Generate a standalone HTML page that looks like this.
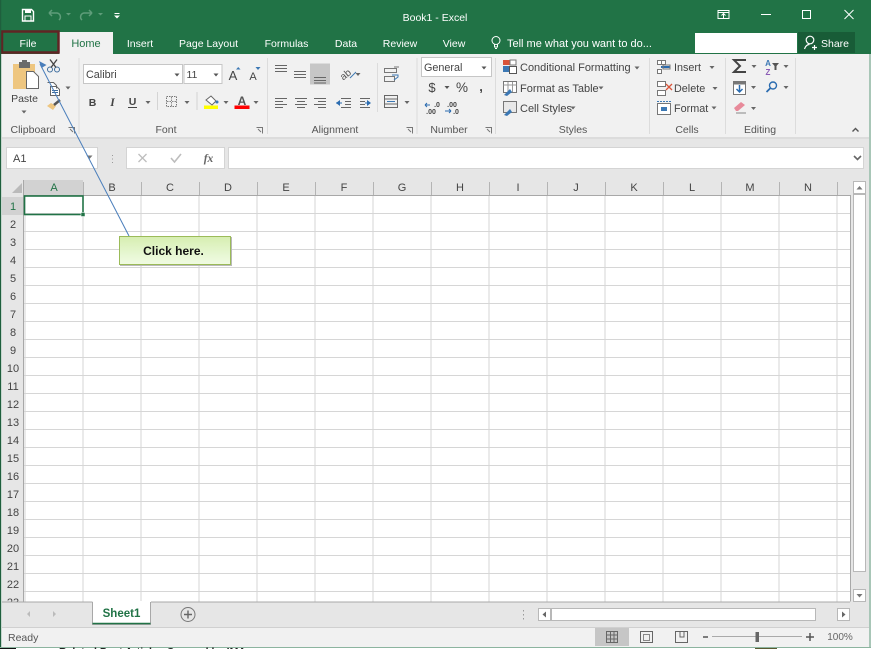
<!DOCTYPE html>
<html><head><meta charset="utf-8">
<style>
html,body{margin:0;padding:0;background:#fff;width:871px;height:649px;overflow:hidden}
svg{display:block;font-family:"Liberation Sans",sans-serif;filter:blur(.3px)}
text{font-size:10.5px;fill:#444}
.w{fill:#fff}
.m{text-anchor:middle}
.h{text-anchor:middle;fill:#444;font-size:11px}
.r{font-size:10.8px}
.ic{fill:none;stroke:#555;stroke-width:1}
</style></head><body>
<svg width="871" height="649" viewBox="0 0 871 649" xmlns="http://www.w3.org/2000/svg">
<defs>
<pattern id="grid" x="25.500" y="196" width="58" height="18" patternUnits="userSpaceOnUse">
<path d="M57.500 0V18M0 17.500H58" fill="none" stroke="#d6d6d6" stroke-width="1"/>
</pattern>
<linearGradient id="call" x1="0" y1="0" x2="0" y2="1"><stop offset="0" stop-color="#d6eeb0"/><stop offset=".7" stop-color="#e9f8d6"/><stop offset="1" stop-color="#f0fbe2"/></linearGradient>
</defs>
<rect width="871" height="649" fill="#fff"/>
<!-- title bar -->
<rect x="0" y="0" width="871" height="54" fill="#217346"/>
<path d="M22.500 9.500h9l2 2v9.500h-11z" fill="none" stroke="#fff" stroke-width="1.400"/>
<rect x="25" y="9" width="6" height="4" fill="#fff"/><rect x="25" y="16" width="6" height="5" fill="none" stroke="#fff"/>
<path d="M49 13l3-3M49 13l3 3M49 13h8a4 4 0 0 1 2 7" fill="none" stroke="#5f9d7a" stroke-width="1.500"/>
<path d="M66 13l2.500 2.500 2.500-2.500z" fill="#5f9d7a"/>
<path d="M92 13l-3-3M92 13l-3 3M92 13h-8a4 4 0 0 0-2 7" fill="none" stroke="#5f9d7a" stroke-width="1.500"/>
<path d="M98 13l2.500 2.500 2.500-2.500z" fill="#5f9d7a"/>
<path d="M114.500 13.500h5" stroke="#fff" fill="none"/><path d="M114 15.500l3 3 3-3z" fill="#fff"/>
<text x="435" y="21" class="w m">Book1 - Excel</text>
<rect x="718" y="10.500" width="11" height="8" fill="none" stroke="#fff"/><path d="M718 12.500h11M723.500 18v-4M721.500 15.500l2-2 2 2" fill="none" stroke="#fff"/>
<path d="M761 14.500h10" stroke="#fff"/>
<rect x="802.500" y="10.500" width="8" height="8" fill="none" stroke="#fff"/>
<path d="M844.500 10l9 9M853.500 10l-9 9" stroke="#fff" fill="none"/>
<!-- tabs -->
<rect x="59" y="32" width="54" height="22" fill="#f1f1f1"/>
<rect x="2" y="31.500" width="56.500" height="21" fill="#217346" stroke="#612424" stroke-width="2.500"/>
<text x="28" y="47" class="w m">File</text>
<text x="86" y="47" class="m" style="fill:#217346;font-size:11px">Home</text>
<text x="140" y="47" class="w m">Insert</text>
<text x="208.500" y="47" class="w m">Page Layout</text>
<text x="286.500" y="47" class="w m">Formulas</text>
<text x="346" y="47" class="w m">Data</text>
<text x="400" y="47" class="w m">Review</text>
<text x="454" y="47" class="w m">View</text>
<circle cx="496" cy="40.500" r="4" fill="none" stroke="#fff"/><path d="M494.500 44.500v2.500h3v-2.500M495 48.500h2" fill="none" stroke="#fff"/>
<text x="507" y="47" class="w" style="font-size:11px">Tell me what you want to do...</text>
<rect x="695" y="33" width="102" height="20" fill="#fff"/>
<rect x="798" y="32" width="57" height="21" fill="#185c37"/>
<circle cx="810" cy="40" r="3.800" fill="none" stroke="#fff" stroke-width="1.200"/>
<path d="M804.500 49c1-3 3-4.500 5-4.500M812 47.500h5M814.500 45v5" fill="none" stroke="#fff" stroke-width="1.200"/>
<text x="821" y="47" class="w">Share</text>
<!-- ribbon -->
<rect x="2" y="54" width="867" height="83" fill="#f1f1f1"/>
<path d="M79 58v76M267.500 58v76M417 58v76M495.500 58v76M649.500 58v76M725.500 58v76M795.500 58v76" stroke="#dcdcdc" stroke-width="1" fill="none"/>
<path d="M377.500 63v49" stroke="#dcdcdc"/>
<path d="M197 92v18M157.500 92v18" stroke="#d4d4d4"/>
<!-- clipboard -->
<rect x="13" y="64" width="22" height="25" fill="#eec680"/>
<rect x="19" y="62" width="11" height="6" fill="#6b6b6b"/><rect x="22" y="60" width="5" height="4" fill="#6b6b6b"/>
<path d="M26.500 71.500h7l5 5v12h-12z" fill="#fff" stroke="#666"/>
<text x="24.500" y="102" class="m">Paste</text>
<path d="M21.500 110.500h5l-2.500 3z" fill="#666"/>
<circle cx="50" cy="69.500" r="2.500" fill="none" stroke="#3c6c9d"/><circle cx="57" cy="69.500" r="2.500" fill="none" stroke="#3c6c9d"/>
<path d="M51 67.500l6-8M56 67.500l-6-8" stroke="#444" stroke-width="1.300" fill="none"/>
<path d="M47.500 82.500h6l3 3v3M50.500 86.500h6l3 3v6h-9z" fill="#fff" stroke="#666"/>
<path d="M52 90.500h6M52 92.500h6" stroke="#3c6c9d"/>
<path d="M65.500 86.500h5l-2.500 3z" fill="#666"/>
<path d="M47 106l6 4 3-4-5-3z" fill="#eec680"/><path d="M54 105l6-5" stroke="#555" stroke-width="2.500"/>
<text x="33" y="133" class="m" style="fill:#555">Clipboard</text>
<path d="M68.500 127.500h6v6M70 129l3 3" fill="none" stroke="#777"/>
<!-- font -->
<rect x="83.500" y="64.500" width="99" height="19" fill="#fff" stroke="#c6c6c6"/>
<rect x="184" y="64.500" width="38" height="19" fill="#fff" stroke="#c6c6c6"/>
<text x="86" y="78" class="r">Calibri</text><text x="186.500" y="78">11</text>
<path d="M174.500 73.500h5l-2.500 3zM213.500 73.500h5l-2.500 3z" fill="#555"/>
<text x="233" y="80" class="m" style="font-size:13px">A</text><path d="M236 69.500h4.500l-2.250-2.500z" fill="#3c78b4"/>
<text x="253" y="80" class="m" style="font-size:11px">A</text><path d="M255.500 67h5l-2.500 3z" fill="#3c78b4"/>
<text x="92.500" y="106" class="m" style="font-weight:bold">B</text>
<text x="112.500" y="106" class="m" style="font-style:italic;font-family:'Liberation Serif',serif;font-weight:bold;font-size:11.500px">I</text>
<text x="132.500" y="105" class="m" style="font-weight:bold">U</text><path d="M128 107.500h9" stroke="#444"/>
<path d="M145.500 101h5l-2.500 3z" fill="#666"/>
<rect x="166.500" y="96.500" width="10" height="10" fill="none" stroke="#777" stroke-dasharray="1.500 1"/><path d="M171.500 97v10M167 101.500h10" stroke="#888" stroke-dasharray="1.500 1"/>
<path d="M184.500 101h5l-2.500 3z" fill="#666"/>
<path d="M206 100l5-4 5 5-4 4z" fill="#fff" stroke="#666"/><circle cx="217" cy="102" r="1.500" fill="#3c78b4"/>
<rect x="204" y="105.500" width="14" height="3.500" fill="#ff0"/>
<path d="M223.500 101h5l-2.500 3z" fill="#666"/>
<text x="242" y="105" class="m" style="font-size:12px;font-weight:bold;fill:#555">A</text>
<rect x="234.500" y="105.500" width="15" height="3.500" fill="#f00"/>
<path d="M253.500 101h5l-2.500 3z" fill="#666"/>
<text x="166" y="133" class="m" style="fill:#555">Font</text>
<path d="M256.500 127.500h6v6M258 129l3 3" fill="none" stroke="#777"/>
<!-- alignment -->
<rect x="310" y="63.500" width="20" height="21" fill="#c6c6c6"/>
<path d="M275 65.500h12M275 68.500h12M275 71.500h12M294 71.500h12M294 74.500h12M294 77.500h12M314 77.500h12M314 80.500h12M314 83h12" stroke="#666" fill="none"/>
<text x="345" y="78" class="m" style="font-size:10px;fill:#555" transform="rotate(-40 345 74)">ab</text>
<path d="M350 78l6-6" stroke="#3c78b4"/><path d="M355.500 73h5l-2.500 3z" fill="#666"/>
<path d="M275 98.500h12M275 101.500h8M275 104.500h12M275 107.500h8M295 98.500h12M297 101.500h8M295 104.500h12M297 107.500h8M314 98.500h12M318 101.500h8M314 104.500h12M318 107.500h8M341 98.500h10M345 101.500h6M345 104.500h6M341 107.500h10M360 98.500h10M360 101.500h5M360 104.500h5M360 107.500h10" stroke="#666" fill="none"/>
<path d="M336 103l4-3v6zM371 103l-4-3v6z" fill="#2b6cb0"/>
<path d="M336 103h6M365 103h5" stroke="#2b6cb0"/>
<rect x="384.500" y="68.500" width="12" height="4" fill="none" stroke="#777"/><path d="M394 67h5" stroke="#777"/>
<rect x="384.500" y="76.500" width="10" height="5" fill="none" stroke="#777"/><path d="M392 75l6 0v2l-4 3" fill="none" stroke="#3c78b4"/>
<rect x="384.500" y="95.500" width="13" height="12" fill="none" stroke="#666"/><path d="M384.500 99h13M384.500 104h13" fill="none" stroke="#666"/><path d="M387 101.500h8" stroke="#3c78b4"/>
<path d="M404.500 101h5l-2.500 3z" fill="#666"/>
<text x="335" y="133" class="m" style="fill:#555">Alignment</text>
<path d="M406.500 127.500h6v6M408 129l3 3" fill="none" stroke="#777"/>
<!-- number -->
<rect x="421.500" y="57.500" width="70" height="19" fill="#fff" stroke="#c6c6c6"/>
<text x="424" y="71" class="r">General</text>
<path d="M481.500 66.500h5l-2.500 3z" fill="#555"/>
<text x="432" y="92" class="m" style="font-size:13px">$</text>
<path d="M444.500 86h5l-2.500 3z" fill="#555"/>
<text x="462" y="92" class="m" style="font-size:13.500px">%</text>
<text x="481" y="91" class="m" style="font-weight:bold;font-size:13px">,</text>
<text x="437" y="107" class="m" style="font-size:7px;font-weight:bold">.0</text>
<text x="431" y="114" style="font-size:7px;font-weight:bold" class="m">.00</text>
<path d="M425 105h5M425 105l2-2M425 105l2 2" stroke="#2b6cb0" fill="none"/>
<text x="452" y="107" class="m" style="font-size:7px;font-weight:bold">.00</text>
<text x="456" y="114" class="m" style="font-size:7px;font-weight:bold">.0</text>
<path d="M445 111h6M451 111l-2-2M451 111l-2 2" stroke="#2b6cb0" fill="none"/>
<text x="449" y="133" class="m" style="fill:#555">Number</text>
<path d="M485.500 127.500h6v6M487 129l3 3" fill="none" stroke="#777"/>
<!-- styles -->
<rect x="503" y="60" width="7" height="5" fill="#d9543a"/><rect x="510" y="60" width="6" height="5" fill="#fff" stroke="#777"/>
<rect x="503" y="66" width="6" height="6" fill="#3c78b4"/><rect x="509.500" y="66.500" width="7" height="7" fill="#fff" stroke="#555"/>
<text x="520" y="71" style="font-size:11px">Conditional Formatting</text><path d="M634.500 66.500h5l-2.500 3z" fill="#666"/>
<rect x="503.500" y="81.500" width="13" height="11" fill="#fff" stroke="#777"/><path d="M503.500 85h13M508 82v10M512.500 82v10" stroke="#999"/><path d="M504 95l6-6 2 3-5 4z" fill="#3c78b4"/>
<text x="520" y="92" style="font-size:11px">Format as Table</text><path d="M598.500 86.500h5l-2.500 3z" fill="#666"/>
<rect x="503.500" y="101.500" width="13" height="11" fill="#e8e8e8" stroke="#777"/><path d="M504 115l6-6 2 3-5 4z" fill="#3c78b4"/>
<text x="520" y="112" style="font-size:11px">Cell Styles</text><path d="M570.500 106.500h5l-2.500 3z" fill="#666"/>
<text x="573" y="133" class="m" style="fill:#555">Styles</text>
<!-- cells -->
<path d="M657.500 60.500h4v4h-4zM661.500 60.500h4v4h-4zM657.500 69.500h4v4h-4z" fill="#fff" stroke="#777"/><path d="M661 67h9" stroke="#2b6cb0" stroke-width="2"/><rect x="663" y="65" width="7" height="4" fill="none" stroke="#777"/>
<text x="674" y="71" class="r">Insert</text><path d="M709.500 66h5l-2.500 3z" fill="#666"/>
<path d="M657.500 81.500h8v5h-8zM657.500 90.500h8v5h-8z" fill="#fff" stroke="#777"/><path d="M666 84l6 6M672 84l-6 6" stroke="#d9543a" stroke-width="1.300"/>
<text x="674" y="92" class="r">Delete</text><path d="M712.500 87h5l-2.500 3z" fill="#666"/>
<rect x="657.500" y="103.500" width="13" height="11" fill="#fff" stroke="#777"/><rect x="661" y="107" width="6" height="4" fill="#3c78b4"/><path d="M657 101.500h14" stroke="#3c78b4" stroke-dasharray="2 1"/>
<text x="674" y="112" class="r">Format</text><path d="M711.500 106.500h5l-2.500 3z" fill="#666"/>
<text x="687" y="133" class="m" style="fill:#555">Cells</text>
<!-- editing -->
<path d="M746 60h-12l6 6-6 6h12" fill="none" stroke="#444" stroke-width="2"/>
<path d="M751.500 65h5l-2.500 3z" fill="#666"/>
<text x="768" y="66" class="m" style="font-size:8px;fill:#3c78b4;font-weight:bold">A</text>
<text x="768" y="75" class="m" style="font-size:8px;fill:#8a5bb5;font-weight:bold">Z</text>
<path d="M772 63h7l-2.500 3v4h-2v-4z" fill="#555"/>
<path d="M783.500 65h5l-2.500 3z" fill="#666"/>
<rect x="733.500" y="81.500" width="12" height="13" fill="#fff" stroke="#777"/><rect x="733.500" y="81.500" width="12" height="3" fill="#777"/>
<path d="M739.500 85v7M736.500 89l3 3 3-3" fill="none" stroke="#2b6cb0" stroke-width="1.500"/>
<path d="M751 86h5l-2.500 3z" fill="#666"/>
<circle cx="773" cy="85.500" r="3.500" fill="none" stroke="#2b6cb0" stroke-width="1.400"/><path d="M770.500 88l-4 4" stroke="#2b6cb0" stroke-width="1.800"/>
<path d="M783.500 86h5l-2.500 3z" fill="#666"/>
<path d="M734 108l7-6 4 3-7 6h-2z" fill="#e88a9a"/><path d="M736 113h10" stroke="#888"/>
<path d="M751 107h5l-2.500 3z" fill="#666"/>
<text x="760" y="133" class="m" style="fill:#555">Editing</text>
<path d="M852.500 131.500l3-3 3 3" fill="none" stroke="#555" stroke-width="1.400"/>
<!-- formula bar -->
<rect x="2" y="137" width="867" height="43" fill="#e6e6e6"/>
<rect x="2" y="137" width="867" height="2" fill="#dcdcdc"/>
<rect x="6.500" y="147.500" width="91" height="21" fill="#fff" stroke="#d4d4d4"/>
<text x="13" y="162" style="font-size:11px">A1</text>
<path d="M86.500 155.500h6l-3 3.500z" fill="#777"/>
<path d="M112.500 155v1M112.500 158.500v1M112.500 162v1" stroke="#999"/>
<rect x="126.500" y="147.500" width="98" height="21" fill="#fff" stroke="#d4d4d4"/>
<path d="M138.500 154l8 8M146.500 154l-8 8" stroke="#bdbdbd" stroke-width="1.300"/>
<path d="M171 158l3.500 4 6.500-8" fill="none" stroke="#bdbdbd" stroke-width="1.600"/>
<text x="208.500" y="162" class="m" style="font-family:'Liberation Serif',serif;font-style:italic;font-size:11.500px;font-weight:bold;fill:#666">fx</text>
<rect x="228.500" y="147.500" width="635" height="21" fill="#fff" stroke="#d4d4d4"/>
<path d="M854 156l3.500 3.500 3.500-3.500" fill="none" stroke="#666" stroke-width="1.600"/>
<!-- grid -->
<rect x="2" y="180" width="867" height="422" fill="#e6e6e6"/>
<rect x="24" y="196" width="826" height="406" fill="#fff"/>
<rect x="24" y="196" width="826" height="406" fill="url(#grid)"/>
<rect x="24" y="180" width="59" height="16" fill="#d2d2d2"/>
<rect x="2" y="197" width="22" height="18" fill="#d2d2d2"/>
<path d="M22 183v10h-10z" fill="#bababa"/>
<path d="M83.500 182v14M141.500 182v14M199.500 182v14M257.500 182v14M315.500 182v14M373.500 182v14M431.500 182v14M489.500 182v14M547.500 182v14M605.500 182v14M663.500 182v14M721.500 182v14M779.500 182v14M837.500 182v14" stroke="#b4b4b4" fill="none"/>
<path d="M24 195.500H850.500V601.500M23.500 180V602" stroke="#a8a8a8" fill="none"/>
<g>
<text x="54" y="191" class="h" style="fill:#217346">A</text><text x="112" y="191" class="h">B</text><text x="170" y="191" class="h">C</text><text x="228" y="191" class="h">D</text><text x="286" y="191" class="h">E</text><text x="344" y="191" class="h">F</text><text x="402" y="191" class="h">G</text><text x="460" y="191" class="h">H</text><text x="518" y="191" class="h">I</text><text x="576" y="191" class="h">J</text><text x="634" y="191" class="h">K</text><text x="692" y="191" class="h">L</text><text x="750" y="191" class="h">M</text><text x="808" y="191" class="h">N</text>
</g>
<g>
<text x="13" y="210" class="h" style="fill:#217346">1</text><text x="13" y="228" class="h">2</text><text x="13" y="246" class="h">3</text><text x="13" y="264" class="h">4</text><text x="13" y="282" class="h">5</text><text x="13" y="300" class="h">6</text><text x="13" y="318" class="h">7</text><text x="13" y="336" class="h">8</text><text x="13" y="354" class="h">9</text><text x="13" y="372" class="h">10</text><text x="13" y="390" class="h">11</text><text x="13" y="408" class="h">12</text><text x="13" y="426" class="h">13</text><text x="13" y="444" class="h">14</text><text x="13" y="462" class="h">15</text><text x="13" y="480" class="h">16</text><text x="13" y="498" class="h">17</text><text x="13" y="516" class="h">18</text><text x="13" y="534" class="h">19</text><text x="13" y="552" class="h">20</text><text x="13" y="570" class="h">21</text><text x="13" y="588" class="h">22</text><text x="13" y="606" class="h">23</text>
</g>
<rect x="24.500" y="196" width="58.500" height="18.500" fill="none" stroke="#217346" stroke-width="1.600"/>
<rect x="81" y="212.500" width="4" height="4" fill="#217346" stroke="#fff" stroke-width=".5"/>
<!-- v scrollbar -->
<rect x="851" y="180" width="18" height="422" fill="#e6e6e6"/>
<rect x="853.500" y="181.500" width="12" height="12" fill="#fff" stroke="#b8b8b8"/>
<path d="M856.500 189.500h6l-3-3.500z" fill="#777"/>
<rect x="853.500" y="194.500" width="12" height="377" fill="#fff" stroke="#b8b8b8"/>
<rect x="853.500" y="589.500" width="12" height="12" fill="#fff" stroke="#b8b8b8"/>
<path d="M856.500 594h6l-3 3.500z" fill="#777"/>
<!-- sheet tabs -->
<rect x="2" y="602" width="867" height="25" fill="#e6e6e6"/>
<path d="M2 602H92.500M151 602H850" stroke="#a8a8a8"/>
<rect x="92.500" y="601" width="58" height="23" fill="#fff"/>
<path d="M92.500 602v22.500h58V602" fill="none" stroke="#a8a8a8"/>
<path d="M92.500 623.500h58" stroke="#217346" stroke-width="1.500"/>
<path d="M30 611v6l-3-3zM53 611v6l3-3z" fill="#bbb"/>
<text x="121.500" y="617" class="m" style="font-weight:bold;font-size:11.500px;fill:#217346">Sheet1</text>
<circle cx="188" cy="614.500" r="7" fill="none" stroke="#777"/><path d="M184 614.500h8M188 610.500v8" stroke="#666" stroke-width="1.400"/>
<path d="M523.500 610v1.500M523.500 614v1.500M523.500 618v1.500" stroke="#999"/>
<rect x="538.500" y="608.500" width="12" height="12" fill="#fff" stroke="#b8b8b8"/><path d="M546 611.500v6l-3.500-3z" fill="#666"/>
<rect x="551.500" y="608.500" width="264" height="12" fill="#fff" stroke="#b8b8b8"/>
<rect x="837.500" y="608.500" width="12" height="12" fill="#fff" stroke="#b8b8b8"/><path d="M842 611.500v6l3.500-3z" fill="#666"/>
<!-- status -->
<rect x="2" y="627" width="867" height="20" fill="#f1f1f1"/>
<path d="M2 627.500H869" stroke="#d0d0d0"/>
<text x="8" y="641" style="fill:#555">Ready</text>
<rect x="595" y="628" width="34" height="18" fill="#c6c6c6"/>
<path d="M606.500 631.500h11v11h-11zM610.500 632v11M614 632v11M606 635h12M606 639h12" fill="none" stroke="#666"/>
<rect x="640.500" y="631.500" width="12" height="11" fill="none" stroke="#666"/><rect x="643.500" y="634.500" width="6" height="6" fill="none" stroke="#888"/>
<path d="M675.500 631.500h12v11h-12zM680 632v5h4v-5" fill="none" stroke="#666"/>
<path d="M703 637h5" stroke="#555" stroke-width="1.500"/>
<path d="M712 636.500h90" stroke="#aaa"/>
<rect x="755.500" y="632" width="3.500" height="10" fill="#666"/>
<path d="M806 637h8M810 633v8" stroke="#555" stroke-width="1.500"/>
<text x="840" y="640" class="m" style="font-size:10px;fill:#666">100%</text>
<!-- frame -->
<path d="M.5 0V649" stroke="#1f5f3d" stroke-width="1.500"/>
<path d="M870 54V647" stroke="#8cb49f" stroke-width="1.500"/>
<path d="M0 647.500H871" stroke="#8cb49f"/>
<rect x="0" y="648" width="16" height="1" fill="#111"/>
<rect x="755" y="648" width="22" height="1" fill="#5a5a30"/>
<text x="59" y="655" style="font-size:10.500px;font-weight:bold;fill:#222">Related Post Articles Covered by IMA</text>
<!-- callout -->
<path d="M129 236L40 64" stroke="#4a7ebb" fill="none"/>
<path d="M39 61l7.500 4-5 3z" fill="#4a7ebb"/>
<rect x="119.500" y="236.500" width="111" height="28" fill="url(#call)" stroke="#9bbb59"/>
<path d="M120 265.500h111M231.500 237v29" stroke="#b9b9b9"/>
<text x="173.500" y="255" class="m" style="font-weight:bold;font-size:12px;fill:#111">Click here.</text>
</svg>
</body></html>
